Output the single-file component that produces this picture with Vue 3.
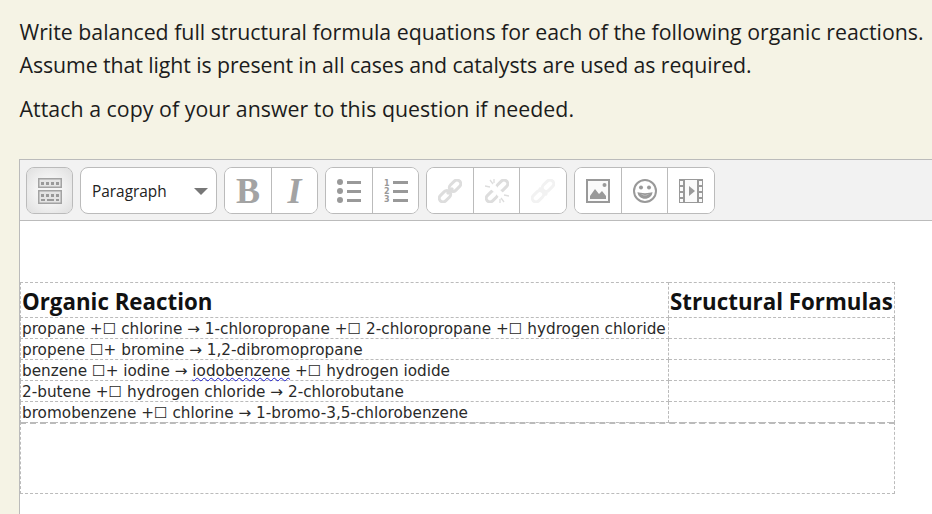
<script setup>
const rows = [
  ['propane +☐ chlorine → 1-chloropropane +☐ 2-chloropropane +☐ hydrogen chloride'],
  ['propene ☐+ bromine → 1,2-dibromopropane'],
  ['benzene ☐+ iodine → ', 'iodobenzene', ' +☐ hydrogen iodide'],
  ['2-butene +☐ hydrogen chloride → 2-chlorobutane'],
  ['bromobenzene +☐ chlorine → 1-bromo-3,5-chlorobenzene']
]
</script>

<template>
  <div class="page">
    <div class="question">
      <p class="line">Write balanced full structural formula equations for each of the following organic reactions.</p>
      <p class="line assume">Assume that light is present in all cases and catalysts are used as required.</p>
      <p class="line attach">Attach a copy of your answer to this question if needed.</p>
    </div>

    <div class="editor">
      <div class="toolbar">
        <div class="group">
          <button class="btn toggle">
            <svg width="24" height="26" viewBox="0 0 24 26">
              <path fill="#a3a3a3" d="M0 0h24v10H0zM0 12h24v14H0z" />
              <path fill="#e4e4e4" d="M1.500 1.500h21v7h-21zM1.500 13.500h21v11h-21z" />
              <path fill="#999" d="M3 4h3v3H3zM8 4h3v3H8zM13 4h3v3h-3zM18 4h3v3h-3zM3 16h3v3H3zM8 16h3v3H8zM13 16h3v3h-3zM18 16h3v3h-3zM3 21h4v2H3zM9 21h7v2H9zM18 21h3v2h-3z" />
            </svg>
          </button>
        </div>
        <div class="group select">
          <span>Paragraph</span>
          <i class="caret"></i>
        </div>
        <div class="group">
          <button class="btn letter bold">B</button>
          <button class="btn letter italic">I</button>
        </div>
        <div class="group">
          <button class="btn">
            <svg width="24" height="24" viewBox="0 0 24 24" fill="#999">
              <circle cx="3" cy="3" r="3" /><circle cx="3" cy="12" r="3" /><circle cx="3" cy="21" r="3" />
              <path d="M10 2h14v3H10zM10 11h14v3H10zM10 20h14v3H10z" />
            </svg>
          </button>
          <button class="btn">
            <svg width="24" height="30" viewBox="0 -3 24 30" fill="#999">
              <g class="digits">
                <text x="0" y="7">1</text>
                <text x="0" y="15">2</text>
                <text x="0" y="23">3</text>
              </g>
              <path d="M9 2h15v3H9zM9 11h15v3H9zM9 20h15v3H9z" />
            </svg>
          </button>
        </div>
        <div class="group">
          <button class="btn">
            <svg width="24" height="24" viewBox="0 0 24 24" fill="none" stroke="#ddd" stroke-width="3">
              <rect x="10.500" y="3" width="13" height="7.500" rx="3.700" transform="rotate(-45 17 6.700)" />
              <rect x="0.500" y="13.500" width="13" height="7.500" rx="3.700" transform="rotate(-45 7 17.300)" />
              <path d="M9 15l6-6" />
            </svg>
          </button>
          <button class="btn">
            <svg width="24" height="24" viewBox="0 0 24 24" fill="none" stroke="#ddd" stroke-width="3">
              <rect x="10.500" y="3" width="13" height="7.500" rx="3.700" transform="rotate(-45 17 6.700)" />
              <rect x="0.500" y="13.500" width="13" height="7.500" rx="3.700" transform="rotate(-45 7 17.300)" />
              <path stroke="#fff" stroke-width="6" d="M7 7l10 10" />
              <path stroke-width="1.300" d="M5 1l3 4M0 7l5 1M9 0v4M19 23l-3-4M24 17l-5-1M15 20v4" />
            </svg>
          </button>
          <button class="btn">
            <svg width="24" height="24" viewBox="0 0 24 24" fill="none" stroke="#f2f2f2" stroke-width="3">
              <rect x="10.500" y="3" width="13" height="7.500" rx="3.700" transform="rotate(-45 17 6.700)" />
              <rect x="0.500" y="13.500" width="13" height="7.500" rx="3.700" transform="rotate(-45 7 17.300)" />
              <path d="M8 9l8 7" />
            </svg>
          </button>
        </div>
        <div class="group">
          <button class="btn">
            <svg width="24" height="24" viewBox="0 0 24 24">
              <path fill="#999" d="M0 0h24v24H0z" />
              <path fill="#fafafa" d="M2 2h20v20H2z" />
              <path fill="#999" d="M4 20v-3l5-7 4 5 3-3 4 5v3z" />
              <circle fill="#999" cx="18.500" cy="6" r="2" />
            </svg>
          </button>
          <button class="btn">
            <svg width="24" height="24" viewBox="0 0 24 24" fill="none" stroke="#999">
              <circle cx="12" cy="12" r="11" stroke-width="2" />
              <circle cx="8" cy="8.500" r="2" fill="#999" stroke="none" />
              <circle cx="16" cy="8.500" r="2" fill="#999" stroke="none" />
              <path fill="#999" stroke="none" d="M4.500 13c3 1.500 12 1.500 15 0-.5 9-14.500 9-15 0z" />
              <path fill="#fafafa" stroke="none" d="M8 15.500c2.500.5 5.500.5 8 0-1 1-7 1-8 0z" />
            </svg>
          </button>
          <button class="btn">
            <svg width="24" height="24" viewBox="0 0 24 24">
              <path fill="#999" d="M0 0h24v24H0z" />
              <path fill="#fafafa" d="M6 1h12v22H6zM1 2h3v4H1zM1 8h3v4H1zM1 14h3v4H1zM1 20h3v3H1zM20 2h3v4h-3zM20 8h3v4h-3zM20 14h3v4h-3zM20 20h3v3h-3z" />
              <path fill="#999" d="M10 7l6 5-6 5z" />
            </svg>
          </button>
        </div>
      </div>

      <div class="content">
        <table class="reactions">
          <thead>
            <tr>
              <th>Organic Reaction</th>
              <th>Structural Formulas</th>
            </tr>
          </thead>
          <tbody>
            <tr v-for="(row, i) in rows" :key="i">
              <td>
                <template v-if="row.length === 1">{{ row[0] }}</template>
                <template v-else>{{ row[0] }}<span class="misspelled">{{ row[1] }}</span>{{ row[2] }}</template>
              </td>
              <td></td>
            </tr>
          </tbody>
        </table>
        <div class="blank"></div>
      </div>
    </div>
  </div>
</template>

<style>
html, body {
  margin: 0;
  overflow: hidden;
}
</style>

<style scoped>
.page {
  width: 932px;
  height: 514px;
  overflow: hidden;
  background: #f5f3e5;
  font-family: "Open Sans", "Noto Sans", sans-serif;
}

.question {
  padding: 15px 0 0 19.5px;
  height: 159px;
  box-sizing: border-box;
}

.line {
  margin: 0;
  font-size: 21.3px;
  line-height: 33px;
  color: #1c1c1c;
  white-space: nowrap;
}

.assume {
  letter-spacing: -0.08px;
}

.attach {
  margin-top: 11px;
  letter-spacing: 0.05px;
}

.editor {
  margin-left: 19px;
  height: 355px;
  background: #fff;
  border-left: 1px solid #bbb;
  border-top: 1px solid #bbb;
  box-sizing: border-box;
}

.toolbar {
  display: flex;
  gap: 7px;
  height: 61px;
  padding: 7px 0 0 6px;
  box-sizing: border-box;
  background: #f2f2f2;
  border-bottom: 1px solid #bbb;
}

.group {
  display: flex;
  height: 47px;
  box-sizing: border-box;
  border: 1px solid #bbb;
  border-radius: 8px;
  background: #fff;
  overflow: hidden;
}

.btn {
  width: 46px;
  height: 45px;
  padding: 0;
  border: 0;
  border-left: 1px solid #bbb;
  background: #fff;
  display: flex;
  align-items: center;
  justify-content: center;
}

.btn:first-child {
  border-left: 0;
}

.btn:nth-child(3) {
  width: 47px;
}

.btn.toggle {
  width: 45px;
  background: radial-gradient(circle, #f4f4f4 40%, #dedede 100%);
}

.digits {
  font-family: "DejaVu Sans", sans-serif;
  font-size: 8px;
  font-weight: 700;
}

.letter {
  font-family: "Liberation Serif", serif;
  font-size: 36px;
  color: #a3a3a3;
}

.bold {
  font-weight: 700;
}

.italic {
  font-style: italic;
  font-weight: 700;
}

.select {
  width: 137px;
  align-items: center;
  justify-content: space-between;
  padding: 1px 8px 0 11px;
  font-size: 15.4px;
  color: #222;
}

.caret {
  width: 0;
  height: 0;
  border-left: 7.5px solid transparent;
  border-right: 7.5px solid transparent;
  border-top: 7px solid #777;
}

.content {
  padding-top: 61px;
}

.reactions {
  border-collapse: collapse;
  width: 875px;
  table-layout: fixed;
  font-family: "DejaVu Sans", Verdana, sans-serif;
  color: #2a2a2a;
}

.reactions th,
.reactions td {
  border: 1px dashed #bbb;
  padding: 2px 0 0 1px;
  text-align: left;
  white-space: nowrap;
  box-sizing: border-box;
}

.reactions th {
  height: 35px;
  font-family: "Open Sans", sans-serif;
  font-size: 22.3px;
  font-weight: 700;
  color: #111;
}

.reactions td {
  height: 21px;
  line-height: 18px;
  font-size: 15.25px;
}

.reactions th:first-child {
  width: 648px;
}

.misspelled {
  text-decoration: underline wavy #1a1acc 1px;
  text-underline-offset: 1px;
}

.blank {
  width: 875px;
  height: 72px;
  margin-top: -1px;
  box-sizing: border-box;
  border: 1px dashed #bbb;
  border-top: 2px dashed #bbb;
}
</style>
